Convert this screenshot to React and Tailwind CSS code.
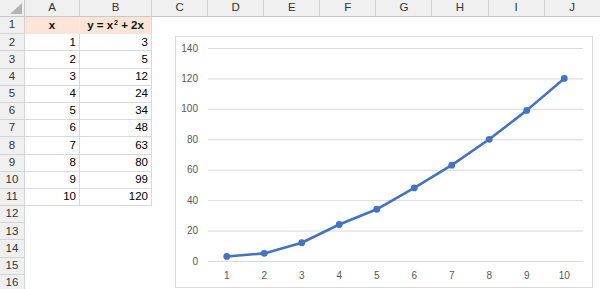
import React from "react";

const data = [
  [1, 3], [2, 5], [3, 12], [4, 24], [5, 34], [6, 48], [7, 63], [8, 80], [9, 99], [10, 120],
];

const otherCols = ["C", "D", "E", "F", "G", "H", "I", "J"];

function Chart() {
  const ox = 175;
  const oy = 36;
  const px0 = 208 - ox;
  const px1 = 583 - ox;
  const y0 = 261 - oy;
  const yTop = 48 - oy;
  const yv = (v) => y0 - (v * (y0 - yTop)) / 140;
  const step = (px1 - px0) / 10;
  const xv = (i) => px0 + step * (i + 0.5);
  const pts = data.map(([, y], i) => `${xv(i)},${yv(y)}`).join(" ");
  return (
    <div className="absolute left-[175px] top-[36px] w-[418px] h-[252px] border border-[#d9d9d9] bg-white">
      <svg width="418" height="252" className="absolute left-[-1px] top-[-1px]">
        {[0, 20, 40, 60, 80, 100, 120, 140].map((v) => (
          <g key={v}>
            <line x1={px0} x2={px1} y1={yv(v) + 0.5} y2={yv(v) + 0.5} stroke="#d9d9d9" strokeWidth="1" />
            <text
              x={px0 - 10}
              y={yv(v) + 3.5}
              textAnchor="end"
              fontSize="10"
              fill="#595959"
              fontFamily="'Liberation Sans', Arial, sans-serif"
            >
              {v}
            </text>
          </g>
        ))}
        {data.map(([x], i) => (
          <text
            key={x}
            x={xv(i)}
            y={y0 + 17.5}
            textAnchor="middle"
            fontSize="10"
            fill="#595959"
            fontFamily="'Liberation Sans', Arial, sans-serif"
          >
            {x}
          </text>
        ))}
        <polyline points={pts} fill="none" stroke="#4472c4" strokeWidth="2.6" strokeLinejoin="round" strokeLinecap="round" />
        {data.map(([x, y], i) => (
          <circle key={x} cx={xv(i)} cy={yv(y)} r="3.4" fill="#4472c4" />
        ))}
      </svg>
    </div>
  );
}

export default function App() {
  const rows = Array.from({ length: 16 }, (_, i) => i + 1);
  return (
    <div
      className="relative w-[600px] h-[289px] overflow-hidden bg-white text-[11.5px] leading-none"
      style={{ fontFamily: "'Liberation Sans', Arial, sans-serif" }}
    >
      <div className="flex h-[17px] bg-[#f0f0f0] border-b border-[#c8c8c8] text-[#333]">
        <div className="relative w-[25px] shrink-0 border-r border-[#c8c8c8]">
          <div className="absolute right-[2px] bottom-[2px] w-0 h-0 border-l-[12px] border-l-transparent border-b-[11px] border-b-[#b4b4b4]" />
        </div>
        <div className="w-[55px] shrink-0 border-r border-[#d4d4d4] flex items-center justify-center">A</div>
        <div className="w-[72px] shrink-0 border-r border-[#d4d4d4] flex items-center justify-center">B</div>
        {otherCols.map((c) => (
          <div key={c} className="w-[56.1px] shrink-0 border-r border-[#d4d4d4] flex items-center justify-center">
            {c}
          </div>
        ))}
      </div>
      {rows.map((r) => {
        const d = r >= 2 && r <= 11 ? data[r - 2] : null;
        return (
          <div key={r} className="flex h-[17.2px]">
            <div className="w-[25px] shrink-0 bg-[#f0f0f0] border-r border-b border-[#d4d4d4] flex items-center justify-center text-[#333]">
              {r}
            </div>
            {r === 1 ? (
              <>
                <div className="w-[55px] shrink-0 bg-[#fce4d6] border-r border-[#fdeee4] flex items-center justify-center font-bold text-[#111]">
                  x
                </div>
                <div className="w-[72px] shrink-0 bg-[#fce4d6] flex items-center justify-center font-bold text-[#111] border-r border-[#d9d9d9]">
                  y = x<sup className="text-[7px] relative top-[-3px] ml-[1px]">2</sup>&nbsp;+ 2x
                </div>
              </>
            ) : d ? (
              <>
                <div className="w-[55px] shrink-0 border-r border-b border-[#d9d9d9] flex items-center justify-end pr-[3px] text-[#000]">
                  {d[0]}
                </div>
                <div className="w-[72px] shrink-0 border-r border-b border-[#d9d9d9] flex items-center justify-end pr-[3px] text-[#000]">
                  {d[1]}
                </div>
              </>
            ) : null}
          </div>
        );
      })}
      <Chart />
    </div>
  );
}
